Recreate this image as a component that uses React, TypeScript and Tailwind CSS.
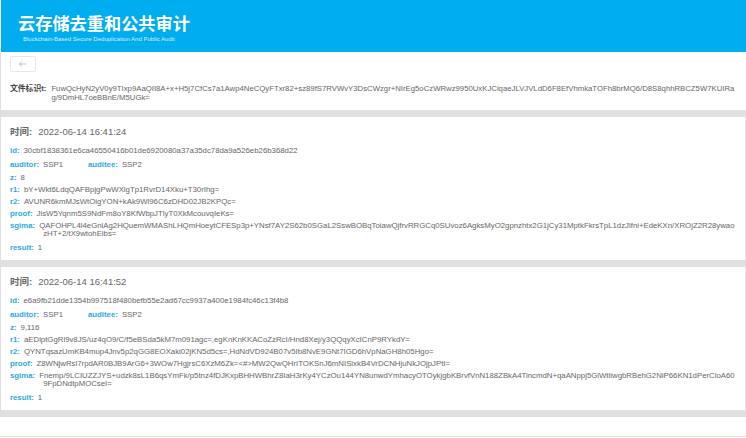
const records = [
  {
    time: "2022-06-14 16:41:24",
    id: "30cbf1838361e6ca46550416b01de6920080a37a35dc78da9a526eb26b368d22",
    z: "8",
    r1: "bY+Wkt6LdqQAFBpjgPwWXlgTp1RvrD14Xku+T30rIhg=",
    r2: "AVUNR6kmMJsWtOigYON+kAk9Wl96C6zDHD02JB2KPQc=",
    proof: "JisW5Yqnm5S9NdFm8oY8KfWbpJTlyT0XkMcouvqIeKs=",
    sgima:
      "QAFOHPL4l4eGnlAg2HQuemWMAShLHQmHoeytCFESp3p+YNsf7AY2S62b0SGaL2SswBOBqToiawQjfrvRRGCq0SUvoz6AgksMyO2gpnzhtx2G1jCy31MptkFkrsTpL1dzJlfni+EdeKXn/XROjZ2R28ywaozHT+2/tX9wtohEibs=",
  },
  {
    time: "2022-06-14 16:41:52",
    id: "e6a9fb21dde1354b997518f480befb55e2ad67cc9937a400e1984fc46c13f4b8",
    z: "9,116",
    r1: "aEDlptGgRl9v8JS/uz4qO9/C/f5eBSda5kM7m091agc=,egKnKnKKACoZzRcI/Hnd8Xej/y3QQqyXcICnP9RYkdY=",
    r2: "QYNTqsazUmKB4mup4Jnv5p2qGG8EOXaki02jKN5d5cs=,HdNdVD924B07v5Ib8NvE9GNt7IGD6hVpNaGH8h05Hgo=",
    proof: "Z8WNjwRsl7rpdAR0BJB9ArG6+3WOw7HgjrsC6XzM6Zk=<#>MW2QwQHrITOKSnJ6mNISixkB4VrDCNHjuNkJOjpJPtI=",
    sgima:
      "Fnemp/9LCIUZZJYS+udzk8sL1B6qsYmFk/p5tnz4fDJKxpBHHWBhrZ8IaH3rKy4YCzOu144YN8unwdYmhacyOTOykjgbKBrvfVnN188ZBkA4TincmdN+qaANppj5GlWtliwgbRBehG2NiP66KN1dPerCloA609FpDNdtpMOCseI=",
  },
];

function Label({ children }: { children: React.ReactNode }) {
  return <span className="font-bold text-[#2ea7e0] mr-[4px]">{children}</span>;
}

export default function App() {
  return (
    <div className="w-[746px] h-[438px] overflow-hidden bg-white text-[#666] text-[7.8px] leading-[12px] font-['Liberation_Sans','Noto_Sans_CJK_SC',sans-serif]">
      {/* Header */}
      <div className="h-[52px] ml-px bg-[#00adef] pl-[17px] pt-[14px] text-white">
        <div className="text-[17.2px] leading-[20px] font-bold">云存储去重和公共审计</div>
        <div className="text-[6px] leading-[8px] mt-px ml-[5px] text-[#d6effb]">Blockchain-Based Secure Deduplication And Public Audit</div>
      </div>

      {/* File info */}
      <div className="h-[58px] pl-[9px] pr-[9px] pt-[4px] border-l border-[#e0e0e0]">
        <button className="w-[26px] h-[16px] flex items-center justify-center border border-[#e8e8e8] rounded-[2px]">
          <svg width="8" height="6" viewBox="0 0 8 6" fill="none" stroke="#999" strokeWidth="0.6">
            <path d="M7.5 3H.5M2.8 .8L.5 3L2.8 5.2" />
          </svg>
        </button>
        <div className="flex mt-[11px]">
          <span className="font-bold text-[#444] whitespace-nowrap mr-[5px]">文件标识t:</span>
          <span className="break-all text-[7.75px] leading-[9px] pt-[1px] min-w-0 flex-1">
            FuwQcHyN2yV0y9TIxp9AaQII8A+x+H5j7CfCs7a1Awp4NeCQyFTxr82+sz89fS7RVWvY3DsCWzgr+NIrEg5oCzWRwz9950UxKJCiqaeJLVJVLdD6F8EfVhmkaTOFh8brMQ6/D8S8qhhRBCZ5W7KUIRag/9DmHL7oeBBnE/M5UGk=
          </span>
        </div>
      </div>

      {/* Records */}
      <div className="border-t-[7px] border-[#e0e0e0]">
        {records.map((r) => (
          <div key={r.id} className="h-[150px] border-b-[7px] border-x border-[#e0e0e0] pl-[9px] pr-[9px] pt-[7px]">
            <div className="text-[9.5px] leading-[16px] mb-[5px]">
              <span className="font-bold mr-[6px]">时间:</span>{r.time}
            </div>
            <div className="h-[13.5px]"><Label>id:</Label>{r.id}</div>
            <div className="flex h-[13px]">
              <div className="w-[78px]"><Label>auditor:</Label>SSP1</div>
              <div><Label>auditee:</Label>SSP2</div>
            </div>
            <div className="h-[12.5px]"><Label>z:</Label>{r.z}</div>
            <div className="h-[11.5px]"><Label>r1:</Label>{r.r1}</div>
            <div className="h-[12px]"><Label>r2:</Label>{r.r2}</div>
            <div className="h-[12px]"><Label>proof:</Label>{r.proof}</div>
            <div className="flex mb-[4px]">
              <Label>sgima:</Label>
              <span className="flex-1 min-w-0 break-all leading-[8px] pt-[2px] pl-[4px] -indent-[4px]">{r.sgima}</span>
            </div>
            <div><Label>result:</Label>1</div>
          </div>
        ))}
      </div>
      <div className="h-[19px]" />
      <div className="h-px bg-[#ecdcdc]" />
    </div>
  );
}
